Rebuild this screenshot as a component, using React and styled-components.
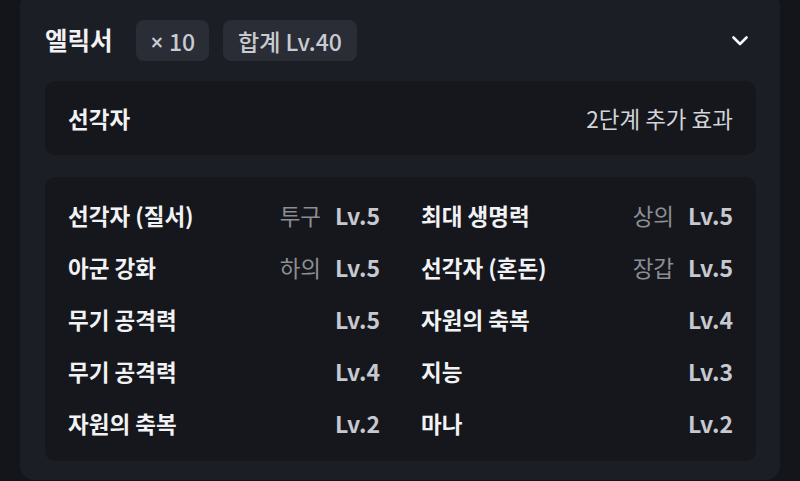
import React from "react";
import styled, { createGlobalStyle } from "styled-components";

const Global = createGlobalStyle`
  html, body { margin: 0; padding: 0; background: #14151a; }
  body { font-family: "Noto Sans CJK KR", "Noto Sans", sans-serif; overflow: hidden; }
`;

const Page = styled.div`
  width: 800px;
  height: 481px;
  padding: 0 20px;
  box-sizing: border-box;
  overflow: hidden;
`;

const Card = styled.section`
  margin-top: -8px;
  background: #1c1e25;
  border-radius: 14px;
  padding: 28px 24px 19px 25px;
  display: flex;
  flex-direction: column;
`;

const Header = styled.header`
  display: flex;
  align-items: center;
  height: 41px;
  margin-bottom: 20px;
`;

const Title = styled.h2`
  margin: 0 23px 0 0;
  font-size: 24.5px;
  font-weight: 700;
  color: #f1f2f4;
  line-height: 1;
`;

const Badge = styled.span`
  display: inline-flex;
  align-items: center;
  height: 41px;
  padding: 0 ${(p) => p.$pad || 14}px;
  margin-right: 14px;
  box-sizing: border-box;
  border-radius: 8px;
  background: #2a2d35;
  color: #c8cbd2;
  font-size: 23px;
  font-weight: 500;
`;

const Times = styled.span`
  font-family: "DejaVu Sans", sans-serif;
  font-size: 17px;
  font-weight: 700;
  margin-right: 5px;
  margin-top: 2px;
`;

const Toggle = styled.button`
  margin-left: auto;
  margin-right: 8px;
  background: none;
  border: 0;
  padding: 0;
  display: flex;
  align-items: center;
  cursor: pointer;
`;

const Panel = styled.div`
  background: #16171c;
  border-radius: 10px;
`;

const SetPanel = styled(Panel)`
  height: 74px;
  box-sizing: border-box;
  padding: 0 23px;
  display: flex;
  align-items: center;
  justify-content: space-between;
  margin-bottom: 22px;
`;

const SetName = styled.span`
  font-size: 22.5px;
  font-weight: 600;
  color: #f1f2f4;
`;

const SetEffect = styled.span`
  font-size: 22.5px;
  font-weight: 400;
  color: #d2d4d9;
`;

const Grid = styled(Panel)`
  height: 284px;
  box-sizing: border-box;
  padding: 12px 23px 12px;
  display: grid;
  grid-template-columns: 1fr 1fr;
  column-gap: 41px;
  grid-auto-rows: 52px;
`;

const Row = styled.div`
  display: flex;
  align-items: center;
  font-size: 22.5px;
`;

const Name = styled.span`
  font-weight: 600;
  color: #f1f2f4;
  flex: 1;
`;

const Slot = styled.span`
  font-weight: 400;
  color: #8b8e95;
  margin-right: 14px;
`;

const Level = styled.span`
  font-weight: 700;
  font-size: 23px;
  color: #c6c9d0;
`;

const rows = [
  ["선각자 (질서)", "투구", "Lv.5"],
  ["최대 생명력", "상의", "Lv.5"],
  ["아군 강화", "하의", "Lv.5"],
  ["선각자 (혼돈)", "장갑", "Lv.5"],
  ["무기 공격력", "", "Lv.5"],
  ["자원의 축복", "", "Lv.4"],
  ["무기 공격력", "", "Lv.4"],
  ["지능", "", "Lv.3"],
  ["자원의 축복", "", "Lv.2"],
  ["마나", "", "Lv.2"],
];

export default function App() {
  return (
    <Page>
      <Global />
      <Card>
        <Header>
          <Title>엘릭서</Title>
          <Badge><Times>×</Times>10</Badge>
          <Badge $pad={15}>합계 Lv.40</Badge>
          <Toggle aria-label="접기">
            <svg width="16" height="10" viewBox="0 0 16 10">
              <polyline points="1.5,1.5 8,8 14.5,1.5" fill="none" stroke="#f4f5f7" strokeWidth="2.6" strokeLinecap="round" strokeLinejoin="round" />
            </svg>
          </Toggle>
        </Header>
        <SetPanel>
          <SetName>선각자</SetName>
          <SetEffect>2단계 추가 효과</SetEffect>
        </SetPanel>
        <Grid>
          {rows.map(([n, s, l], i) => (
            <Row key={i}>
              <Name>{n}</Name>
              {s && <Slot>{s}</Slot>}
              <Level>{l}</Level>
            </Row>
          ))}
        </Grid>
      </Card>
    </Page>
  );
}
